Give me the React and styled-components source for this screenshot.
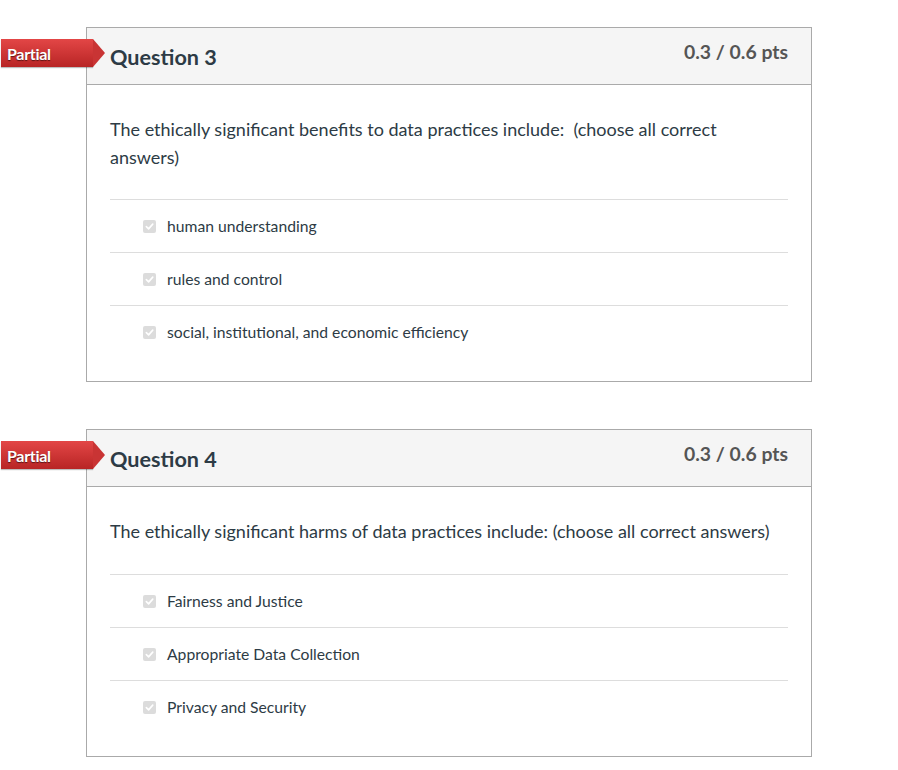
import React from "react";
import styled, { createGlobalStyle } from "styled-components";

const Global = createGlobalStyle`
  html, body { margin: 0; padding: 0; background: #fff; }
  body { font-family: Lato, "Open Sans", "Liberation Sans", sans-serif; color: #2d3b45; }
`;

const Page = styled.div`
  display: flex;
  flex-direction: column;
  gap: 47px;
  padding: 27px 0 0 86px;
  width: 726px;
`;

const Card = styled.section`
  position: relative;
  border: 1px solid #aaaaaa;
  background: #fff;
`;

const Badge = styled.div`
  position: absolute;
  left: -86px;
  top: 11px;
  height: 28px;
  width: 92px;
  box-sizing: border-box;
  padding-left: 6px;
  display: flex;
  align-items: center;
  background: linear-gradient(#e34646, #b82525);
  color: #fff;
  font-weight: 700;
  font-size: 16px;
  letter-spacing: -0.3px;
  text-shadow: 0 1px 1px rgba(0, 0, 0, 0.55);
  box-shadow: 0 1px 1px rgba(0,0,0,0.25);
  &::after {
    content: "";
    position: absolute;
    right: -12px;
    top: 0;
    border-top: 14px solid transparent;
    border-bottom: 14px solid transparent;
    border-left: 12px solid #c93434;
  }
`;

const Header = styled.header`
  display: flex;
  justify-content: space-between;
  align-items: flex-start;
  height: 57px;
  box-sizing: border-box;
  background: #f5f5f5;
  border-bottom: 1px solid #aaaaaa;
  padding: 0 23px;
`;

const Title = styled.h2`
  margin: 0;
  padding-top: 16px;
  font-size: 21.6px;
  font-weight: 700;
  line-height: 26px;
  color: #2d3b45;
`;

const Points = styled.div`
  padding-top: 12px;
  font-size: 19.4px;
  font-weight: 700;
  line-height: 24px;
  color: #555555;
`;

const Body = styled.div`
  padding: 30px 23px 23px;
`;

const Prompt = styled.p`
  margin: 0 0 ${p => p.$gap}px;
  font-size: 18px;
  line-height: 28px;
  color: #2d3b45;
`;

const Answers = styled.ul`
  list-style: none;
  margin: 0;
  padding: 0;
`;

const Answer = styled.li`
  display: flex;
  align-items: center;
  gap: 11px;
  height: 53px;
  box-sizing: border-box;
  padding-left: 33px;
  border-top: 1px solid #dddddd;
  font-size: 15.7px;
  color: #2d3b45;
`;

const Check = styled.span`
  width: 13px;
  height: 13px;
  border-radius: 2px;
  background: #dcdcdc;
  display: flex;
  align-items: center;
  justify-content: center;
  flex: none;
`;

const CheckBox = () => (
  <Check>
    <svg width="9" height="9" viewBox="0 0 10 10">
      <path d="M1.5 5.2 L4 7.6 L8.6 2.4" fill="none" stroke="#fff" strokeWidth="1.8" strokeLinecap="round" strokeLinejoin="round" />
    </svg>
  </Check>
);

const questions = [
  {
    n: 3,
    prompt: "The ethically significant benefits to data practices include:\u00a0 (choose all correct answers)",
    gap: 28,
    answers: ["human understanding", "rules and control", "social, institutional, and economic efficiency"],
  },
  {
    n: 4,
    prompt: "The ethically significant harms of data practices include: (choose all correct answers)",
    gap: 29,
    answers: ["Fairness and Justice", "Appropriate Data Collection", "Privacy and Security"],
  },
];

export default function App() {
  return (
    <>
      <Global />
      <Page>
        {questions.map(q => (
          <Card key={q.n}>
            <Badge>Partial</Badge>
            <Header>
              <Title>Question {q.n}</Title>
              <Points>0.3 / 0.6 pts</Points>
            </Header>
            <Body>
              <Prompt $gap={q.gap}>{q.prompt}</Prompt>
              <Answers>
                {q.answers.map(a => (
                  <Answer key={a}>
                    <CheckBox />
                    {a}
                  </Answer>
                ))}
              </Answers>
            </Body>
          </Card>
        ))}
      </Page>
    </>
  );
}
